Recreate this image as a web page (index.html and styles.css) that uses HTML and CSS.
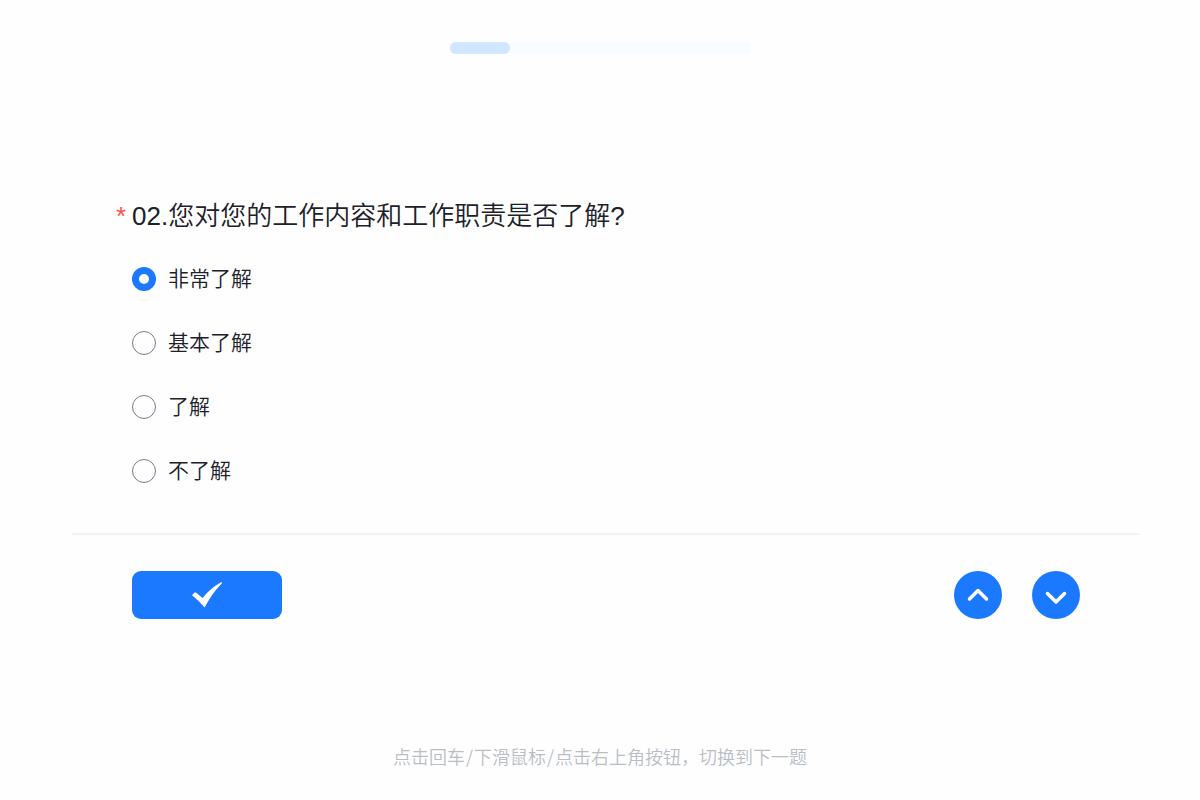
FILE: index.html
```html
<!DOCTYPE html>
<html lang="zh-CN">
<head>
  <meta charset="UTF-8">
  <meta name="viewport" content="width=device-width, initial-scale=1.0">
  <title>问卷调查</title>
  <link rel="stylesheet" href="styles.css">
</head>
<body>
<header class="top">
  <div class="progress" role="progressbar" aria-label="答题进度" aria-valuemin="0" aria-valuemax="100" aria-valuenow="20">
    <div class="progress-bar" style="width: 20%"></div>
  </div>
</header>

<main>
  <form class="survey">
    <fieldset class="question">
      <legend class="title"><span class="required">*</span>02.您对您的工作内容和工作职责是否了解?</legend>
      <div class="options">
        <label class="option"><input type="radio" name="q2" value="1" checked>非常了解</label>
        <label class="option"><input type="radio" name="q2" value="2">基本了解</label>
        <label class="option"><input type="radio" name="q2" value="3">了解</label>
        <label class="option"><input type="radio" name="q2" value="4">不了解</label>
      </div>
    </fieldset>

    <div class="actions">
      <button type="submit" class="confirm" aria-label="确定">
        <svg width="32" height="28" viewBox="0 0 32 28">
          <path fill="#fff" d="M1 14.2 L3.6 11.6 Q4.4 11.2 5.2 11.8 L11.6 17 C17 10.500 22.500 5 30 1.200 Q31.600 .800 30.800 2.600 C23.500 10 18.500 17.500 13.600 26.600 Q8 19.500 1 14.200 Z"/>
        </svg>
      </button>
      <div class="pager">
        <button type="button" class="round" aria-label="上一题">
          <svg width="24" height="24" viewBox="0 0 24 24"><path d="M3.500 16 L12 7.500 L20.500 16"/></svg>
        </button>
        <button type="button" class="round" aria-label="下一题">
          <svg width="24" height="24" viewBox="0 0 24 24"><path d="M3.500 10.500 L12 19 L20.500 10.500"/></svg>
        </button>
      </div>
    </div>
  </form>
</main>

<footer class="hint">点击回车<span class="slash">/</span>下滑鼠标<span class="slash">/</span>点击右上角按钮，切换到下一题</footer>
</body>
</html>
```

FILE: styles.css
```css
* {
  box-sizing: border-box;
}
body {
  display: flex;
  flex-direction: column;
  min-height: 100vh;
  margin: 0;
  font-family: "Liberation Sans", "Noto Sans CJK SC", sans-serif;
  font-weight: 350;
  color: #1d2129;
  background: #fefefe;
}
.top {
  padding: 42px 0 144px;
}
.progress {
  width: 25%;
  height: 12px;
  margin: 0 auto;
  background: #f7fcff;
}
.progress-bar {
  height: 100%;
  background: #d0e7ff;
  border-radius: 6px;
}
.survey {
  margin: 0 60px 0 72px;
}
.question {
  margin: 0;
  padding: 0 60px;
  border: none;
}
.title {
  position: relative;
  padding: 0;
  font-size: 26px;
  line-height: 36px;
}
.required {
  position: absolute;
  right: 100%;
  margin-right: 6px;
  color: #ff5050;
}
.options {
  display: flex;
  flex-direction: column;
  align-items: flex-start;
  gap: 32px;
  padding: 29px 0 46px;
}
.option {
  display: flex;
  align-items: center;
  gap: 12px;
  font-size: 21px;
  line-height: 32px;
  cursor: pointer;
}
.option input {
  appearance: none;
  width: 24px;
  height: 24px;
  margin: 0;
  border: 1px solid #76808c;
  border-radius: 50%;
}
.option input:checked {
  border: 7px solid #1a79ff;
}
.actions {
  display: flex;
  justify-content: space-between;
  padding: 36px 60px 0;
  border-top: 2px solid #f1f4f7;
}
button {
  display: flex;
  align-items: center;
  justify-content: center;
  height: 48px;
  padding: 0;
  border: none;
  background: #1a79ff;
  cursor: pointer;
}
button:hover {
  background: #0f66e0;
}
.confirm {
  width: 150px;
  border-radius: 9px;
}
.pager {
  display: flex;
  gap: 30px;
}
.round {
  width: 48px;
  border-radius: 50%;
}
.round path {
  fill: none;
  stroke: #fff;
  stroke-width: 3.5;
  stroke-linecap: round;
  stroke-linejoin: round;
}
.hint {
  margin-top: auto;
  padding-bottom: 31px;
  font-family: "Noto Sans CJK SC", sans-serif;
  font-size: 18px;
  line-height: 26px;
  text-align: center;
  color: #b9bec6;
}
.slash {
  padding: 0 1px;
}
```
